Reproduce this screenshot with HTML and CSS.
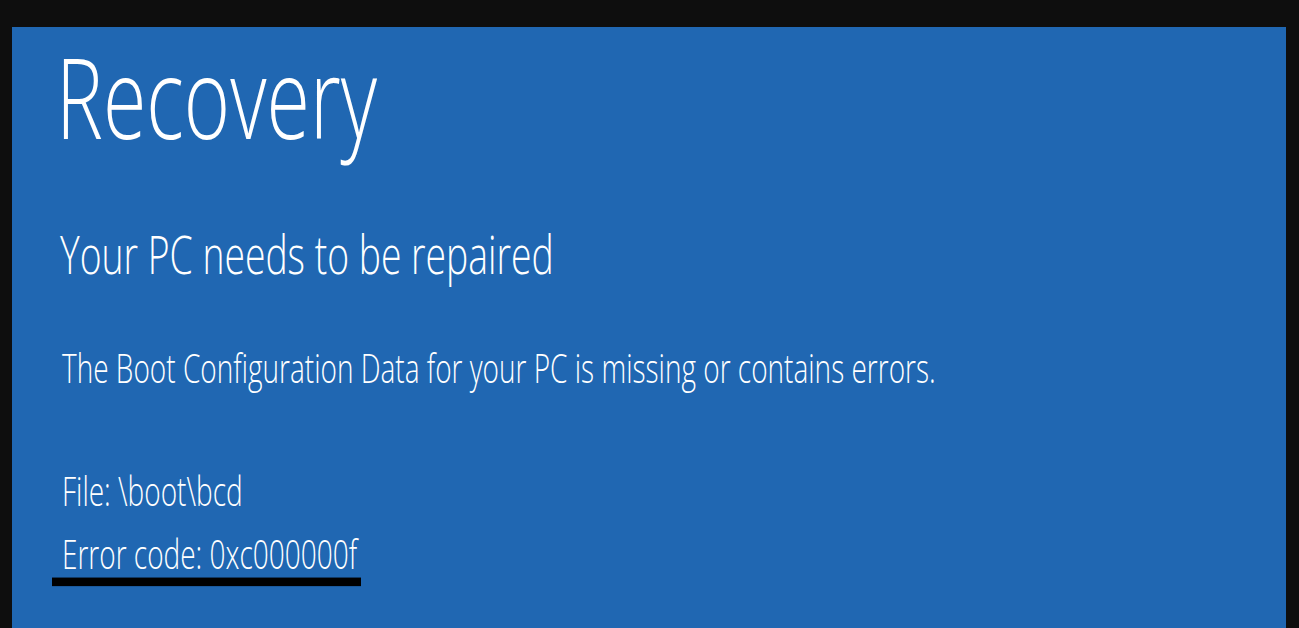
FILE: index.html
```html
<!DOCTYPE html>
<html lang="en">
<head>
<meta charset="utf-8">
<title>Recovery</title>
<link rel="stylesheet" href="styles.css">
</head>
<body>
<main class="screen">
  <div class="content">
    <h1 class="title">Recovery</h1>
    <h2 class="subtitle">Your PC needs to be repaired</h2>
    <p class="message">The Boot Configuration Data for your PC is missing or contains errors.</p>
    <p class="detail file">File: \boot\bcd</p>
    <p class="detail error">Error code: 0xc000000f</p>
  </div>
</main>
</body>
</html>
```

FILE: styles.css
```css
html, body {
  margin: 0;
  height: 100%;
  background: #0e0e0e;
}
body {
  padding: 27px 13px 0 12px;
  box-sizing: border-box;
  overflow: hidden;
}
.screen {
  background: #2067b2;
  height: 100%;
  color: #ffffff;
  font-family: "Open Sans", "Noto Sans", sans-serif;
  font-weight: 300;
}
.content {
  display: flex;
  flex-direction: column;
  align-items: flex-start;
  padding: 0 0 0 44px;
  transform: scale(1, 1.43);
  transform-origin: left top;
}
.title {
  margin: -6px 0 0 0;
  font-size: 79px;
  font-weight: 300;
  line-height: 108px;
}
.subtitle {
  margin: 30.5px 0 0 4px;
  font-size: 37.3px;
  font-weight: 300;
  line-height: 52px;
}
.message {
  margin: 33px 0 0 6px;
  font-size: 28px;
  line-height: 40px;
}
.detail {
  margin: 0 0 0 6px;
  font-size: 28px;
  line-height: 40px;
}
.file {
  margin-top: 46px;
}
.error {
  margin: 7.7px 0 0 -4px;
  padding: 0 4px 0 10px;
  line-height: 34px;
  border-bottom: 6.3px solid #000;
}
```
